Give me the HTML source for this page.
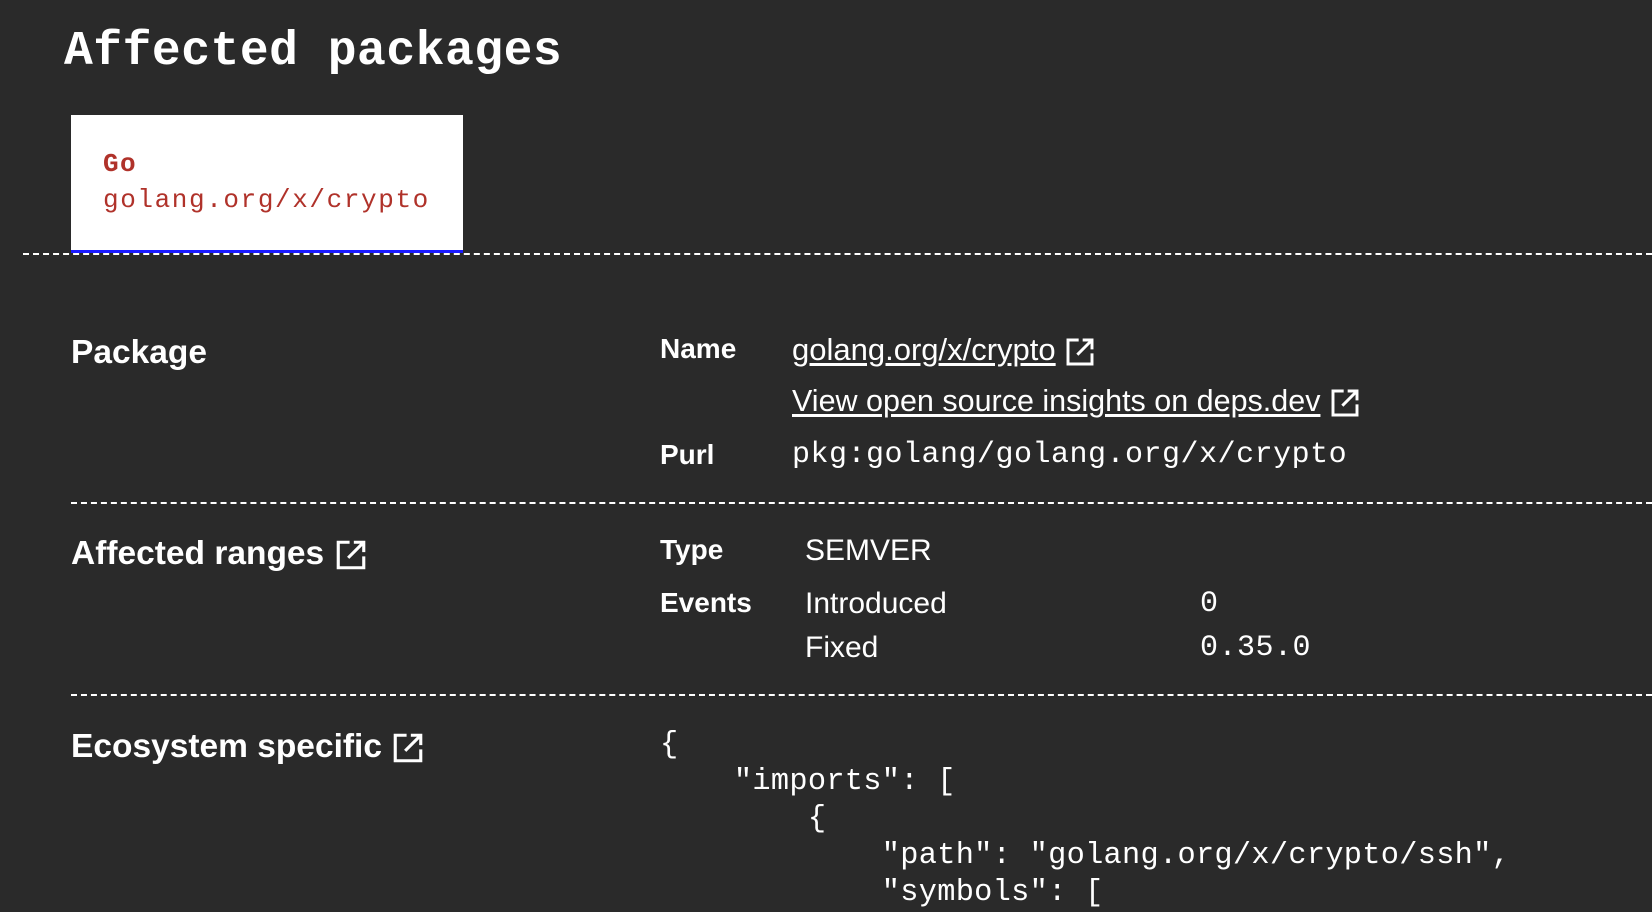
<!DOCTYPE html>
<html><head><meta charset="utf-8"><style>
html,body{margin:0;padding:0;background:#2a2a2a;width:1652px;height:886px;overflow:hidden;color:#fff;font-family:"Liberation Sans",sans-serif}
.a{position:absolute;white-space:pre;line-height:1}
.mono{font-family:"Liberation Mono",monospace}
.dash{position:absolute;height:0;border-top:2px dashed #fff;right:0}
.lbl{font-weight:bold;font-size:33.5px}
.k{font-weight:bold;font-size:28px}
.v{font-size:30px}
a{color:#fff;text-decoration:underline;text-underline-offset:3px}
svg{vertical-align:middle}
</style></head><body>
<div class="a mono" style="left:64px;top:28px;font-size:48px;font-weight:bold;letter-spacing:0.5px">Affected packages</div>
<div style="position:absolute;left:71px;top:115px;width:392px;height:135px;background:#fff;border-bottom:3px solid #1a1aff"></div>
<div class="a mono" style="left:103px;top:151px;font-size:26px;font-weight:bold;color:#b0322a;letter-spacing:1.4px">Go</div>
<div class="a mono" style="left:103px;top:187px;font-size:26px;color:#b0322a;letter-spacing:1.6px">golang.org/x/crypto</div>
<div class="dash" style="left:23px;top:253px"></div>

<div class="a lbl" style="left:71px;top:336px">Package</div>
<div class="a k" style="left:660px;top:335px">Name</div>
<div class="a v" style="left:792px;top:334px;font-size:31px"><a>golang.org/x/crypto</a> <svg width="32" height="32" viewBox="0 0 24 24" fill="none" stroke="#fff" stroke-width="2.2"><path d="M11 3H3v18h18v-8M14 3h7v7M21 3L10 14"/></svg></div>
<div class="a v" style="left:792px;top:386px;font-size:30.5px"><a>View open source insights on deps.dev</a> <svg width="32" height="32" viewBox="0 0 24 24" fill="none" stroke="#fff" stroke-width="2.2"><path d="M11 3H3v18h18v-8M14 3h7v7M21 3L10 14"/></svg></div>
<div class="a k" style="left:660px;top:441px">Purl</div>
<div class="a v mono" style="left:792px;top:440px;font-size:30px;letter-spacing:0.5px">pkg:golang/golang.org/x/crypto</div>
<div class="dash" style="left:71px;top:502px"></div>

<div class="a lbl" style="left:71px;top:537px">Affected ranges <svg width="34" height="34" viewBox="0 0 24 24" fill="none" stroke="#fff" stroke-width="2.2"><path d="M11 3H3v18h18v-8M14 3h7v7M21 3L10 14"/></svg></div>
<div class="a k" style="left:660px;top:536px">Type</div>
<div class="a v" style="left:805px;top:536px">SEMVER</div>
<div class="a k" style="left:660px;top:589px">Events</div>
<div class="a v" style="left:805px;top:589px">Introduced</div>
<div class="a v mono" style="left:1200px;top:589px;font-size:30px">0</div>
<div class="a v" style="left:805px;top:633px">Fixed</div>
<div class="a v mono" style="left:1200px;top:633px;font-size:30px;letter-spacing:0.5px">0.35.0</div>
<div class="dash" style="left:71px;top:694px"></div>

<div class="a lbl" style="left:71px;top:730px">Ecosystem specific <svg width="34" height="34" viewBox="0 0 24 24" fill="none" stroke="#fff" stroke-width="2.2"><path d="M11 3H3v18h18v-8M14 3h7v7M21 3L10 14"/></svg></div>
<div class="a mono" style="left:660px;top:727px;font-size:30.3px;line-height:37px;letter-spacing:0.3px">{
    "imports": [
        {
            "path": "golang.org/x/crypto/ssh",
            "symbols": [</div>
</body></html>
